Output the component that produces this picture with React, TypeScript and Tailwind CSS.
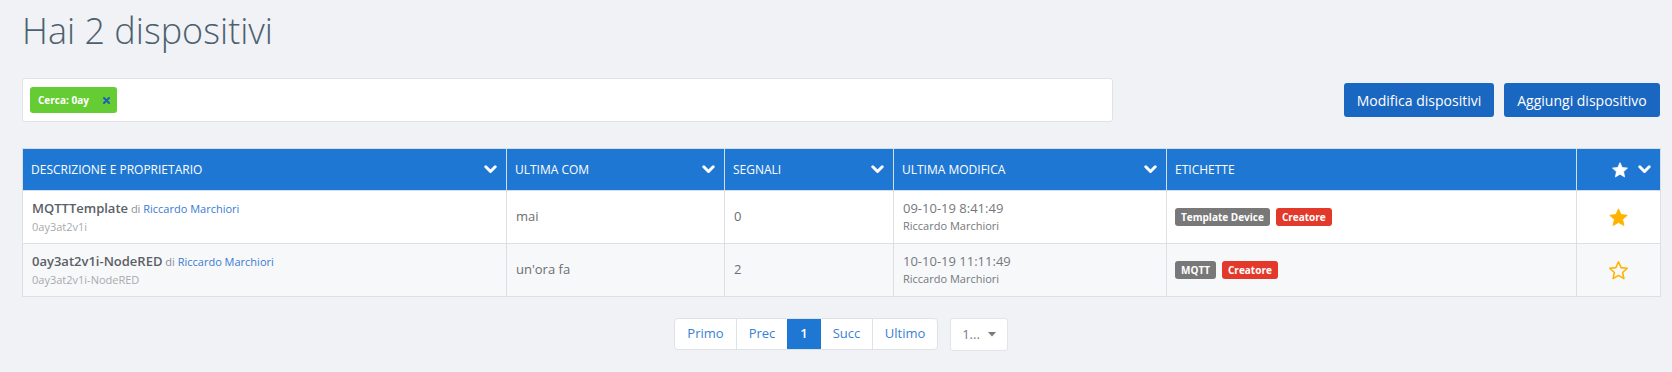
import React from 'react';

const Chevron = ({ className = '' }: { className?: string }) => (
    <svg className={className} width="13" height="9" viewBox="0 0 13 9" fill="none">
        <path d="M1.8 1.8L6.5 6.5L11.2 1.8" stroke="currentColor" strokeWidth="3" strokeLinecap="round" strokeLinejoin="round" />
    </svg>
);

const Star = ({ filled, size = 20, className = '' }: { filled: boolean; size?: number; className?: string }) => (
    <svg className={className} width={size} height={size} viewBox="0 0 24 24">
        <path
            d="M12 2.2l2.95 6.5 7.05.75-5.3 4.8 1.5 7-6.2-3.6-6.2 3.6 1.5-7-5.3-4.8 7.05-.75z"
            fill={filled ? 'currentColor' : 'none'}
            stroke="currentColor"
            strokeWidth={filled ? 1 : 1.8}
            strokeLinejoin="round"
        />
    </svg>
);

const Tag = ({ label, red }: { label: string; red?: boolean }) => (
    <span className={`inline-flex items-center h-[18px] px-[6px] rounded-[3px] text-[10px] font-bold text-white ${red ? 'bg-[#e3392b]' : 'bg-[#787878]'}`}>
        {label}
    </span>
);

const devices = [
    {
        name: 'MQTTTemplate',
        id: '0ay3at2v1i',
        lastCom: 'mai',
        signals: '0',
        modified: '09-10-19 8:41:49',
        tags: ['Template Device'],
        fav: true,
    },
    {
        name: '0ay3at2v1i-NodeRED',
        id: '0ay3at2v1i-NodeRED',
        lastCom: "un'ora fa",
        signals: '2',
        modified: '10-10-19 11:11:49',
        tags: ['MQTT'],
        fav: false,
    },
];

const headers = ['DESCRIZIONE E PROPRIETARIO', 'ULTIMA COM', 'SEGNALI', 'ULTIMA MODIFICA', 'ETICHETTE'];
const sortable = [true, true, true, true, false];

const App = () => {
    return (
        <div className="min-h-screen bg-[#f0f2f6] pl-[22px] pr-[12px] pt-[12px] font-['Open_Sans',sans-serif]">
            {/* Title */}
            <h1 className="text-[36px] leading-[38px] font-light text-[#4d606e]">Hai 2 dispositivi</h1>

            {/* Search + actions */}
            <div className="mt-[28px] flex items-center">
                <div className="w-[1091px] h-[44px] bg-white border border-[#dfe2e7] rounded-[3px] px-[7px] flex items-center">
                    <span className="inline-flex items-center h-[26px] w-[87px] pl-[8px] rounded-[3px] bg-[#66cc33] text-[10px] font-bold text-white">
                        Cerca: 0ay
                        <svg className="ml-[14px]" width="7" height="7" viewBox="0 0 7 7">
                            <path d="M1 1L6 6M6 1L1 6" stroke="#1f5fb8" strokeWidth="2" strokeLinecap="round" />
                        </svg>
                    </span>
                </div>
                <div className="ml-auto flex gap-[10px]">
                    <button className="h-[34px] w-[150px] rounded-[3px] bg-[#1a67c1] text-white text-[14px]">Modifica dispositivi</button>
                    <button className="h-[34px] w-[156px] rounded-[3px] bg-[#1a67c1] text-white text-[14px]">Aggiungi dispositivo</button>
                </div>
            </div>

            {/* Devices table */}
            <table className="mt-[26px] w-[1638px] table-fixed border-collapse bg-white">
                <colgroup>
                    <col className="w-[484px]" />
                    <col className="w-[218px]" />
                    <col className="w-[169px]" />
                    <col className="w-[273px]" />
                    <col className="w-[410px]" />
                    <col className="w-[84px]" />
                </colgroup>
                <thead>
                    <tr className="h-[42px] bg-[#1e77d3] text-white text-[12px]">
                        {headers.map((h, i) => (
                            <th key={h} className="border border-[#d5dde6] px-[8px] font-normal text-left">
                                <div className="flex items-center justify-between">
                                    <span>{h}</span>
                                    {sortable[i] && <Chevron className="mr-[1px]" />}
                                </div>
                            </th>
                        ))}
                        <th className="border border-[#d5dde6] px-[8px]">
                            <div className="flex items-center justify-end gap-[9px] pr-[1px]">
                                <Star filled size={18} />
                                <Chevron />
                            </div>
                        </th>
                    </tr>
                </thead>
                <tbody>
                    {devices.map((d, idx) => (
                        <tr key={d.id} className={`h-[53px] ${idx % 2 ? 'bg-[#f7f8fa]' : 'bg-white'}`}>
                            <td className="border border-[#dddfe2] px-[9px] align-middle">
                                <div className="leading-[18px] text-[13px]">
                                    <span className="font-semibold text-[#5a6066]">{d.name}</span>
                                    <span className="text-[11px] text-[#8a8f94]"> di </span>
                                    <span className="text-[11px] text-[#3a7bd5]">Riccardo Marchiori</span>
                                </div>
                                <div className="leading-[18px] text-[11px] text-[#a7aaad]">{d.id}</div>
                            </td>
                            <td className="border border-[#dddfe2] px-[9px] text-[13px] text-[#6b6e71]">{d.lastCom}</td>
                            <td className="border border-[#dddfe2] px-[9px] text-[13px] text-[#6b6e71]">{d.signals}</td>
                            <td className="border border-[#dddfe2] px-[9px]">
                                <div className="leading-[18px] text-[13px] text-[#75787b]">{d.modified}</div>
                                <div className="leading-[18px] text-[11px] text-[#75787b]">Riccardo Marchiori</div>
                            </td>
                            <td className="border border-[#dddfe2] px-[8px]">
                                <div className="flex gap-[6px]">
                                    {d.tags.map((t) => (
                                        <Tag key={t} label={t} />
                                    ))}
                                    <Tag label="Creatore" red />
                                </div>
                            </td>
                            <td className="border border-[#dddfe2]">
                                <div className="flex justify-center">
                                    <Star filled={d.fav} size={21} className="text-[#ffb300]" />
                                </div>
                            </td>
                        </tr>
                    ))}
                </tbody>
            </table>

            {/* Pagination */}
            <div className="mt-[21px] flex justify-center items-start gap-[12px] w-[1638px]">
                <div className="flex h-[32px] bg-white border border-[#dee2e6] rounded-[4px] text-[13px] text-[#3a7fd5]">
                    <span className="w-[62px] flex items-center justify-center border-r border-[#dee2e6]">Primo</span>
                    <span className="w-[50px] flex items-center justify-center">Prec</span>
                    <span className="w-[34px] flex items-center justify-center bg-[#1e77d3] text-white font-semibold">1</span>
                    <span className="w-[52px] flex items-center justify-center border-r border-[#dee2e6]">Succ</span>
                    <span className="w-[64px] flex items-center justify-center">Ultimo</span>
                </div>
                <div className="h-[33px] w-[58px] bg-white border border-[#e1e4e8] rounded-[3px] flex items-center justify-center gap-[8px] text-[13px] text-[#777a7d]">
                    <span>1...</span>
                    <svg width="8" height="5" viewBox="0 0 8 5">
                        <path d="M0 0h8L4 4.5z" fill="#777a7d" />
                    </svg>
                </div>
            </div>
        </div>
    );
};

export default App;
